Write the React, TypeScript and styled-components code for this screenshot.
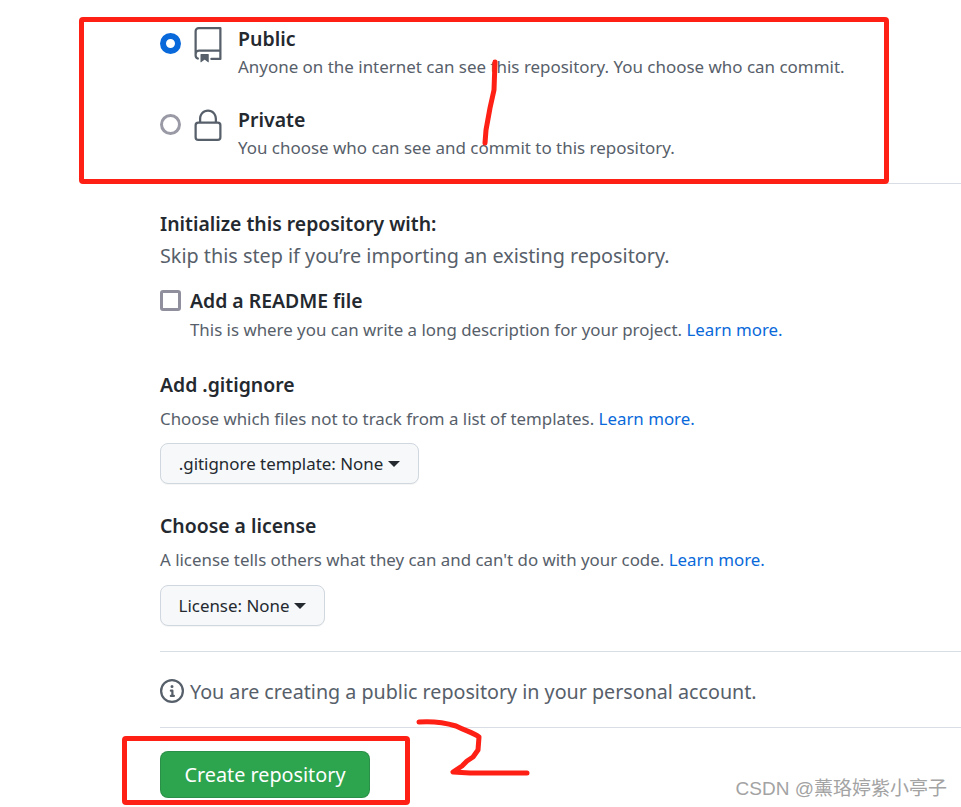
import React from "react";
import styled, { createGlobalStyle } from "styled-components";

const GlobalStyle = createGlobalStyle`
  html, body { margin: 0; padding: 0; background: #fff; }
  body { font-family: "Noto Sans", "Open Sans", sans-serif; color: #24292f; }
`;

const Page = styled.div`
  position: relative;
  width: 961px;
  height: 807px;
  overflow: hidden;
  padding-left: 160px;
  box-sizing: border-box;
`;

const Options = styled.div`
  display: flex;
  flex-direction: column;
  gap: 25px;
  padding: 24px 0 22px;
`;

const Option = styled.div`
  display: flex;
  align-items: flex-start;
`;

const Radio = styled.span<{ $checked?: boolean }>`
  flex: none;
  width: 21px;
  height: 21px;
  margin-top: 9px;
  box-sizing: border-box;
  border-radius: 50%;
  background: #fff;
  border: ${(p) => (p.$checked ? "6px solid #0969da" : "3px solid #9a9aa6")};
`;

const RepoIcon = styled.svg`
  flex: none;
  width: 36px;
  height: 36px;
  margin: 3px 12px 0 9px;
  fill: #57606a;
`;

const OptionTitle = styled.div`
  font-size: 19.5px;
  line-height: 30px;
  font-weight: 600;
  color: #24292f;
`;

const Muted = styled.div`
  font-size: 16.95px;
  line-height: 26px;
  color: #57606a;
  white-space: nowrap;
`;

const Rule = styled.hr<{ $top?: number }>`
  height: 1px;
  margin: ${(p) => p.$top ?? 0}px 0 0;
  border: 0;
  background: #d8dee4;
`;

const Heading = styled.div<{ $top: number }>`
  margin-top: ${(p) => p.$top}px;
  font-size: 19.4px;
  line-height: 30px;
  font-weight: 600;
`;

const Lead = styled.div`
  margin-top: 2px;
  font-size: 19.8px;
  line-height: 30px;
  color: #57606a;
`;

const CheckRow = styled.div`
  display: flex;
  align-items: center;
  gap: 9px;
  margin-top: 14px;
  height: 30px;
  font-size: 19.4px;
  font-weight: 600;
`;

const Checkbox = styled.span`
  width: 21px;
  height: 21px;
  box-sizing: border-box;
  border: 3px solid #8f8f9d;
  border-radius: 3px;
  background: #fff;
`;

const Hint = styled(Muted)<{ $left?: number; $top: number }>`
  margin-left: ${(p) => p.$left ?? 0}px;
  margin-top: ${(p) => p.$top}px;
  font-size: 16.88px;
`;

const Link = styled.a`
  color: #0969da;
  text-decoration: none;
`;

const Select = styled.button<{ $width: number; $top: number }>`
  display: flex;
  align-items: center;
  justify-content: center;
  gap: 5px;
  width: ${(p) => p.$width}px;
  height: 41px;
  margin-top: ${(p) => p.$top}px;
  padding: 0;
  box-sizing: border-box;
  font: 400 16.9px "Noto Sans", sans-serif;
  color: #24292f;
  background: #f6f8fa;
  border: 1px solid #d0d7de;
  border-radius: 8px;
  box-shadow: 0 1px 0 rgba(27, 31, 36, 0.04);
`;

const Caret = styled.span`
  width: 0;
  height: 0;
  border-top: 6px solid #24292f;
  border-left: 6px solid transparent;
  border-right: 6px solid transparent;
`;

const Notice = styled.div`
  display: flex;
  align-items: center;
  gap: 6px;
  height: 30px;
  margin: 24px 0 21px;
  font-size: 19.7px;
  color: #57606a;
`;

const InfoIcon = styled.svg`
  width: 24px;
  height: 24px;
  fill: #57606a;
`;

const CreateButton = styled.button`
  display: block;
  width: 210px;
  height: 47px;
  margin-top: 23px;
  padding: 0;
  font: 400 19.8px "Noto Sans", sans-serif;
  color: #fff;
  background: #2da44e;
  border: 1px solid rgba(27, 31, 36, 0.15);
  border-radius: 8px;
`;

/* hand drawn annotations that lie over the screenshot */
const RedBox = styled.div<{ $x: number; $y: number; $w: number; $h: number }>`
  position: absolute;
  left: ${(p) => p.$x}px;
  top: ${(p) => p.$y}px;
  width: ${(p) => p.$w}px;
  height: ${(p) => p.$h}px;
  box-sizing: border-box;
  border: 5px solid #ff2015;
  border-radius: 4px;
`;

const Scribble = styled.svg`
  position: absolute;
  left: 0;
  top: 0;
  width: 961px;
  height: 807px;
  fill: none;
  stroke: #ff2015;
  stroke-width: 5;
  stroke-linecap: round;
  stroke-linejoin: round;
  pointer-events: none;
`;

const Watermark = styled.div`
  position: absolute;
  right: 14px;
  bottom: 6px;
  font-family: "Liberation Sans", "Noto Sans CJK SC", sans-serif;
  font-size: 19px;
  line-height: 24px;
  color: #a3a3a3;
  white-space: nowrap;
`;

export default function App() {
  return (
    <Page>
      <GlobalStyle />
      <Options>
        <Option>
          <Radio $checked />
          <RepoIcon viewBox="0 0 24 24">
            <path d="M3 2.75A2.75 2.75 0 0 1 5.75 0h14.5a.75.75 0 0 1 .75.75v20.5a.75.75 0 0 1-.75.75h-6a.75.75 0 0 1 0-1.5h5.25v-4H6A1.5 1.5 0 0 0 4.5 18v.75c0 .716.43 1.334 1.05 1.605a.75.75 0 0 1-.6 1.374A3.251 3.251 0 0 1 3 18.75ZM19.5 1.5H5.75c-.69 0-1.25.56-1.25 1.25v12.651A2.989 2.989 0 0 1 6 15h13.5Z" />
            <path d="M7 18.25a.25.25 0 0 1 .25-.25h5a.25.25 0 0 1 .25.25v5.01a.25.25 0 0 1-.397.201l-2.206-1.604a.25.25 0 0 0-.294 0L7.397 23.46a.25.25 0 0 1-.397-.2Z" />
          </RepoIcon>
          <div>
            <OptionTitle>Public</OptionTitle>
            <Muted>Anyone on the internet can see this repository. You choose who can commit.</Muted>
          </div>
        </Option>
        <Option>
          <Radio />
          <RepoIcon viewBox="0 0 24 24">
            <path d="M6 9V7.25C6 3.845 8.503 1 12 1s6 2.845 6 6.25V9h.5a2.5 2.5 0 0 1 2.5 2.5v8a2.5 2.5 0 0 1-2.5 2.5h-13A2.5 2.5 0 0 1 3 19.5v-8A2.5 2.5 0 0 1 5.5 9Zm-1.5 2.5v8a1 1 0 0 0 1 1h13a1 1 0 0 0 1-1v-8a1 1 0 0 0-1-1h-13a1 1 0 0 0-1 1Zm3-4.25V9h9V7.25c0-2.67-1.922-4.75-4.5-4.75-2.578 0-4.5 2.08-4.5 4.75Z" />
          </RepoIcon>
          <div>
            <OptionTitle>Private</OptionTitle>
            <Muted>You choose who can see and commit to this repository.</Muted>
          </div>
        </Option>
      </Options>
      <Rule />

      <Heading $top={25}>Initialize this repository with:</Heading>
      <Lead>Skip this step if you’re importing an existing repository.</Lead>
      <CheckRow>
        <Checkbox />
        Add a README file
      </CheckRow>
      <Hint $left={30} $top={2}>
        This is where you can write a long description for your project. <Link>Learn more.</Link>
      </Hint>

      <Heading $top={27}>Add .gitignore</Heading>
      <Hint $top={6}>
        Choose which files not to track from a list of templates. <Link>Learn more.</Link>
      </Hint>
      <Select $width={259} $top={11}>
        .gitignore template: None <Caret />
      </Select>

      <Heading $top={27}>Choose a license</Heading>
      <Hint $top={6}>
        A license tells others what they can and can't do with your code. <Link>Learn more.</Link>
      </Hint>
      <Select $width={165} $top={12}>
        License: None <Caret />
      </Select>

      <Rule $top={25} />
      <Notice>
        <InfoIcon viewBox="0 0 16 16">
          <path d="M0 8a8 8 0 1 1 16 0A8 8 0 0 1 0 8Zm8-6.5a6.5 6.5 0 1 0 0 13 6.5 6.5 0 0 0 0-13ZM6.5 7.75A.75.75 0 0 1 7.25 7h1a.75.75 0 0 1 .75.75v2.75h.25a.75.75 0 0 1 0 1.5h-2a.75.75 0 0 1 0-1.5h.25v-2h-.25a.75.75 0 0 1-.75-.75ZM8 6a1 1 0 1 1 0-2 1 1 0 0 1 0 2Z" />
        </InfoIcon>
        You are creating a public repository in your personal account.
      </Notice>
      <Rule />
      <CreateButton>Create repository</CreateButton>

      <RedBox $x={79} $y={17} $w={810} $h={167} />
      <RedBox $x={122} $y={736} $w={288} $h={69} />
      <Scribble viewBox="0 0 961 807">
        <path d="M495 62 L494 90 L490 108 L486 130 L485 143" />
        <path d="M419 722 C432 721 446 723 456 726 C466 731 474 733 479 737 L478 750 L473 757 L467 761 L462 766 L453 772 L470 773 L527 773" />
      </Scribble>
      <Watermark>CSDN @薰珞婷紫小亭子</Watermark>
    </Page>
  );
}
